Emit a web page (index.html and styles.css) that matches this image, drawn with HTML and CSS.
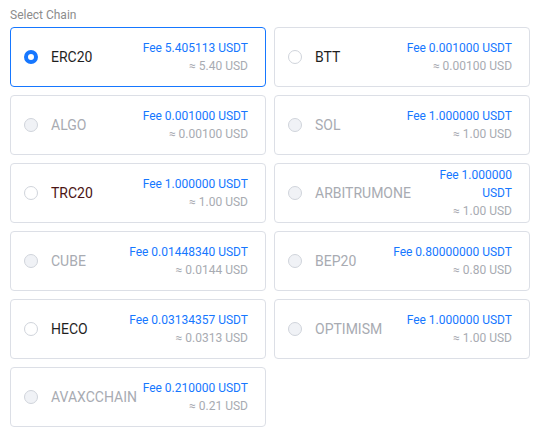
FILE: index.html
```html
<!DOCTYPE html>
<html lang="en">
<head>
  <meta charset="UTF-8" />
  <meta name="viewport" content="width=device-width, initial-scale=1.0"/>
  <title>Select Chain</title>
  <link rel="stylesheet" href="styles.css">
</head>
<body>
  <div class="chain-picker">
    <div class="picker-label">Select Chain</div>
    <div class="chain-grid">
      <label class="chain-card selected">
        <span class="radio"></span>
        <span class="chain-name">ERC20</span>
        <span class="chain-fee"><span class="fee">Fee 5.405113 USDT</span><span class="usd">≈ 5.40 USD</span></span>
      </label>
      <label class="chain-card">
        <span class="radio"></span>
        <span class="chain-name">BTT</span>
        <span class="chain-fee"><span class="fee">Fee 0.001000 USDT</span><span class="usd">≈ 0.00100 USD</span></span>
      </label>
      <label class="chain-card disabled">
        <span class="radio"></span>
        <span class="chain-name">ALGO</span>
        <span class="chain-fee"><span class="fee">Fee 0.001000 USDT</span><span class="usd">≈ 0.00100 USD</span></span>
      </label>
      <label class="chain-card disabled">
        <span class="radio"></span>
        <span class="chain-name">SOL</span>
        <span class="chain-fee"><span class="fee">Fee 1.000000 USDT</span><span class="usd">≈ 1.00 USD</span></span>
      </label>
      <label class="chain-card">
        <span class="radio"></span>
        <span class="chain-name trc">TRC20</span>
        <span class="chain-fee"><span class="fee">Fee 1.000000 USDT</span><span class="usd">≈ 1.00 USD</span></span>
      </label>
      <label class="chain-card disabled">
        <span class="radio"></span>
        <span class="chain-name">ARBITRUMONE</span>
        <span class="chain-fee"><span class="fee">Fee 1.000000 USDT</span><span class="usd">≈ 1.00 USD</span></span>
      </label>
      <label class="chain-card disabled">
        <span class="radio"></span>
        <span class="chain-name">CUBE</span>
        <span class="chain-fee"><span class="fee">Fee 0.01448340 USDT</span><span class="usd">≈ 0.0144 USD</span></span>
      </label>
      <label class="chain-card disabled">
        <span class="radio"></span>
        <span class="chain-name">BEP20</span>
        <span class="chain-fee"><span class="fee">Fee 0.80000000 USDT</span><span class="usd">≈ 0.80 USD</span></span>
      </label>
      <label class="chain-card">
        <span class="radio"></span>
        <span class="chain-name">HECO</span>
        <span class="chain-fee"><span class="fee">Fee 0.03134357 USDT</span><span class="usd">≈ 0.0313 USD</span></span>
      </label>
      <label class="chain-card disabled">
        <span class="radio"></span>
        <span class="chain-name">OPTIMISM</span>
        <span class="chain-fee"><span class="fee">Fee 1.000000 USDT</span><span class="usd">≈ 1.00 USD</span></span>
      </label>
      <label class="chain-card disabled">
        <span class="radio"></span>
        <span class="chain-name">AVAXCCHAIN</span>
        <span class="chain-fee"><span class="fee">Fee 0.210000 USDT</span><span class="usd">≈ 0.21 USD</span></span>
      </label>
    </div>
  </div>
</body>
</html>
```

FILE: styles.css
```css
html, body {
  margin: 0;
  padding: 0;
  background: #fff;
  font-family: Roboto, 'Liberation Sans', sans-serif;
}

.chain-picker {
  padding: 7px 8px 0 10px;
}
.picker-label {
  font-size: 12px;
  line-height: 16px;
  color: #8c8c8c;
  margin-bottom: 4px;
}

.chain-grid {
  display: grid;
  grid-template-columns: 256px 256px;
  gap: 8px;
}

.chain-card {
  box-sizing: border-box;
  min-height: 60px;
  display: flex;
  align-items: center;
  padding: 0 17px 0 13px;
  border: 1px solid #dcdfe6;
  border-radius: 4px;
  cursor: pointer;
}
.chain-card.selected {
  border-color: #1677ff;
}

.radio {
  box-sizing: border-box;
  flex-shrink: 0;
  width: 14px;
  height: 14px;
  border: 1px solid #d0d4db;
  border-radius: 50%;
  background: #fff;
  margin-right: 13px;
}
.chain-card.selected .radio {
  border: 4px solid #1677ff;
  background: #fff;
}
.chain-card.disabled .radio {
  background: #f0f2f6;
}

.chain-name {
  flex-shrink: 0;
  font-size: 14px;
  color: #1f1f1f;
  margin-right: 4px;
}
.chain-name.trc {
  color: #4a1414;
}
.chain-card.disabled .chain-name {
  color: #a8abb2;
}

.chain-fee {
  margin-left: auto;
  min-width: 0;
  display: flex;
  flex-direction: column;
  text-align: right;
  font-size: 12px;
  line-height: 18px;
}
.fee {
  color: #1677ff;
}
.usd {
  color: #a8abb2;
}
```
